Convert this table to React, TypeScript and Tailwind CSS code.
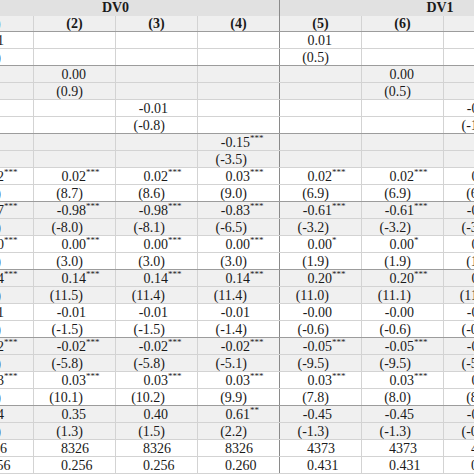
import React from "react";

type RowType = "coef" | "t" | "n";
interface RowDef {
  type: RowType;
  cells: string[];
}

const rows: RowDef[] = [
  { type: "coef", cells: ["0.01", "", "", "", "0.01", "", ""] },
  { type: "t", cells: ["(0.6)", "", "", "", "(0.5)", "", ""] },
  { type: "coef", cells: ["", "0.00", "", "", "", "0.00", ""] },
  { type: "t", cells: ["", "(0.9)", "", "", "", "(0.5)", ""] },
  { type: "coef", cells: ["", "", "-0.01", "", "", "", "-0.01"] },
  { type: "t", cells: ["", "", "(-0.8)", "", "", "", "(-1.3)"] },
  { type: "coef", cells: ["", "", "", "-0.15***", "", "", ""] },
  { type: "t", cells: ["", "", "", "(-3.5)", "", "", ""] },
  { type: "coef", cells: ["0.02***", "0.02***", "0.02***", "0.03***", "0.02***", "0.02***", "0.02***"] },
  { type: "t", cells: ["(8.8)", "(8.7)", "(8.6)", "(9.0)", "(6.9)", "(6.9)", "(6.9)"] },
  { type: "coef", cells: ["-0.97***", "-0.98***", "-0.98***", "-0.83***", "-0.61***", "-0.61***", "-0.60***"] },
  { type: "t", cells: ["(-8.0)", "(-8.0)", "(-8.1)", "(-6.5)", "(-3.2)", "(-3.2)", "(-3.1)"] },
  { type: "coef", cells: ["0.00***", "0.00***", "0.00***", "0.00***", "0.00*", "0.00*", "0.00*"] },
  { type: "t", cells: ["(3.0)", "(3.0)", "(3.0)", "(3.0)", "(1.9)", "(1.9)", "(1.9)"] },
  { type: "coef", cells: ["0.14***", "0.14***", "0.14***", "0.14***", "0.20***", "0.20***", "0.20***"] },
  { type: "t", cells: ["(11.5)", "(11.5)", "(11.4)", "(11.4)", "(11.0)", "(11.1)", "(11.0)"] },
  { type: "coef", cells: ["-0.01", "-0.01", "-0.01", "-0.01", "-0.00", "-0.00", "-0.00"] },
  { type: "t", cells: ["(-1.5)", "(-1.5)", "(-1.5)", "(-1.4)", "(-0.6)", "(-0.6)", "(-0.6)"] },
  { type: "coef", cells: ["-0.02***", "-0.02***", "-0.02***", "-0.02***", "-0.05***", "-0.05***", "-0.05***"] },
  { type: "t", cells: ["(-5.8)", "(-5.8)", "(-5.8)", "(-5.1)", "(-9.5)", "(-9.5)", "(-5.4)"] },
  { type: "coef", cells: ["0.03***", "0.03***", "0.03***", "0.03***", "0.03***", "0.03***", "0.03***"] },
  { type: "t", cells: ["(10.1)", "(10.1)", "(10.2)", "(9.9)", "(7.8)", "(8.0)", "(8.1)"] },
  { type: "coef", cells: ["0.34", "0.35", "0.40", "0.61**", "-0.45", "-0.45", "-0.23"] },
  { type: "t", cells: ["(1.3)", "(1.3)", "(1.5)", "(2.2)", "(-1.3)", "(-1.3)", "(-0.8)"] },
  { type: "n", cells: ["8326", "8326", "8326", "8326", "4373", "4373", "4373"] },
  { type: "n", cells: ["0.256", "0.256", "0.256", "0.260", "0.431", "0.431", "0.432"] },
];

function CellContent({ type, value }: { type: RowType; value: string }) {
  if (!value) return null;
  if (type === "coef") {
    const m = value.match(/^([^*]*)(\**)$/);
    const num = m ? m[1] : value;
    const stars = m ? m[2] : "";
    return (
      <div className="flex h-full justify-end pr-[13px]">
        <span className="leading-[17px]">{num}</span>
        <span className="w-[16px] self-start text-left text-[9px] leading-[9px]">{stars}</span>
      </div>
    );
  }
  if (type === "t") {
    return <div className="flex h-full justify-end pr-[32px] leading-[17px]">{value}</div>;
  }
  return <div className="h-full pl-[27px] leading-[17px]">{value}</div>;
}

function DataRow({ row, d }: { row: RowDef; d: number }) {
  const gray = Math.floor((d - 1) / 2) % 2 === 1;
  const dark = [2, 6, 10, 14, 18, 22].includes(d);
  return (
    <div
      className={`flex h-[17px] border-b ${dark ? "border-[#9c9c9c]" : "border-[#d3d3d3]"} ${
        gray ? "bg-[#f0f0f0]" : "bg-white"
      }`}
    >
      {row.cells.map((c, i) => (
        <div
          key={i}
          className={`h-full w-[82px] shrink-0 border-r ${i === 3 ? "border-[#8a8a8a]" : "border-[#d3d3d3]"}`}
        >
          <CellContent type={row.type} value={c} />
        </div>
      ))}
      <div className="h-full w-[82px] shrink-0" />
    </div>
  );
}

export default function App() {
  const heads = ["(1)", "(2)", "(3)", "(4)", "(5)", "(6)", "(7)", "(8)"];
  return (
    <div className="h-[474px] w-[474px] overflow-hidden bg-white [font-family:'Liberation_Serif','Times_New_Roman',serif] text-[14px] text-[#1a1a1a]">
      <div className="ml-[-48px] w-[656px]">
        <div className="flex h-[16px] bg-[#e1e1e1] font-bold">
          <div className="h-full w-[328px] shrink-0 border-r border-[#8a8a8a] text-center leading-[16px]">DV0</div>
          <div className="h-full w-[320px] shrink-0 text-center leading-[16px]">DV1</div>
        </div>
        <div className="flex h-[16px] border-b border-[#9c9c9c] bg-[#efefef] font-bold">
          {heads.map((h, i) => (
            <div
              key={h}
              className={`h-full w-[82px] shrink-0 text-center leading-[15px] ${
                i === 7 ? "" : i === 3 ? "border-r border-[#8a8a8a]" : "border-r border-[#d3d3d3]"
              }`}
            >
              {h}
            </div>
          ))}
        </div>
        {rows.map((r, idx) => (
          <DataRow key={idx} row={r} d={idx + 1} />
        ))}
      </div>
    </div>
  );
}
